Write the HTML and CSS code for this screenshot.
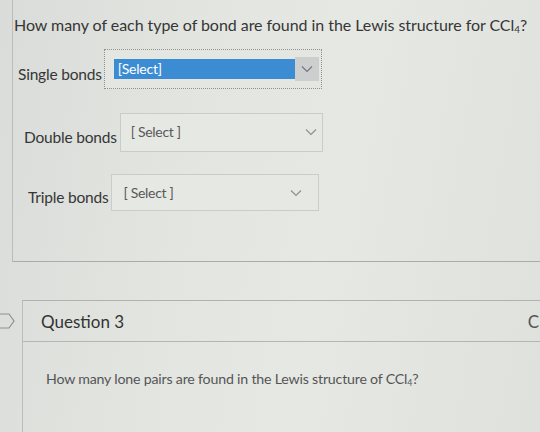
FILE: index.html
```html
<!DOCTYPE html>
<html>
<head>
<meta charset="utf-8">
<link rel="stylesheet" href="styles.css">
</head>
<body>
<div class="page">
  <section class="card1">
    <p class="q">How many of each type of bond are found in the Lewis structure for CCl<sub>4</sub>?</p>
    <div class="row r1">
      <span class="lbl">Single bonds</span>
      <div class="sel focus">
        <span class="hl">[Select]</span>
        <span class="arr"><svg width="12" height="8" viewBox="0 0 12 8"><path d="M1 1.5 L6 6.5 L11 1.5" fill="none" stroke="#6f7a86" stroke-width="1.2"/></svg></span>
      </div>
    </div>
    <div class="row r2">
      <span class="lbl">Double bonds</span>
      <div class="sel plain w2">
        <span class="txt">[ Select ]</span>
        <svg width="12" height="8" viewBox="0 0 12 8"><path d="M1 1.5 L6 6.5 L11 1.5" fill="none" stroke="#8a8f94" stroke-width="1.1"/></svg>
      </div>
    </div>
    <div class="row r3">
      <span class="lbl">Triple bonds</span>
      <div class="sel plain w3">
        <span class="txt">[ Select ]</span>
        <svg width="12" height="8" viewBox="0 0 12 8"><path d="M1 1.5 L6 6.5 L11 1.5" fill="none" stroke="#8a8f94" stroke-width="1.1"/></svg>
      </div>
    </div>
  </section>
  <div class="q3wrap">
    <svg class="flag" width="20" height="16" viewBox="0 0 20 16"><path d="M-4 1 H9 L14 8 L9 15 H-4" fill="none" stroke="#8d918d" stroke-width="1.2"/></svg>
    <section class="card2">
      <header class="head"><span>Question 3</span><span class="cut">C</span></header>
      <p class="q2">How many lone pairs are found in the Lewis structure of CCl<sub>4</sub>?</p>
    </section>
  </div>
</div>
</body>
</html>
```
FILE: styles.css
```css
html, body {
  margin: 0;
  padding: 0;
}
body {
  width: 540px;
  height: 432px;
  overflow: hidden;
  background: linear-gradient(100deg, #d9dcd8 0%, #e3e5e1 35%, #e6e8e4 60%, #dfe1dd 100%);
  font-family: Lato, "Open Sans", sans-serif;
  color: #353535;
}
.page {
  display: flex;
  flex-direction: column;
}
.card1 {
  margin-left: 12px;
  height: 262px;
  box-sizing: border-box;
  border-left: 1px solid #b9bcb8;
  border-bottom: 1px solid #a9aca8;
  display: flex;
  flex-direction: column;
}
.q {
  margin: 15px 0 0 1px;
  font-size: 16px;
  letter-spacing: -0.05px;
  line-height: 20px;
  color: #363636;
  white-space: nowrap;
}
.q sub, .q2 sub {
  font-size: 0.62em;
  vertical-align: -0.2em;
  line-height: 0;
}
.row {
  display: flex;
  align-items: center;
}
.lbl {
  font-size: 15.5px;
  letter-spacing: -0.2px;
  color: #363636;
  white-space: nowrap;
}
.r1 {
  margin-top: 14px;
  padding-left: 5px;
}
.r1 .lbl { margin-right: 2px; margin-top: 10px; }
.sel {
  box-sizing: border-box;
  display: flex;
  align-items: center;
}
.focus {
  width: 218px;
  height: 40px;
  border: 1px dotted #8e918e;
  padding: 0 2px 0 9px;
  background: #e4e6e2;
}
.hl {
  width: 182px;
  height: 20px;
  background: #3c8cd4;
  color: #fff;
  font-size: 14px;
  line-height: 20px;
  padding-left: 4px;
  box-sizing: border-box;
  letter-spacing: -0.2px;
}
.arr {
  width: 24px;
  height: 24px;
  background: #cdcfcf;
  display: flex;
  align-items: center;
  justify-content: center;
}
.r2 {
  margin-top: 24px;
  padding-left: 11px;
}
.r2 .lbl { margin-right: 3px; margin-top: 8px; }
.plain {
  border: 1px solid #c9ccc8;
  background: #e6e8e4;
  justify-content: space-between;
}
.plain .txt {
  font-size: 14px;
  color: #585858;
  letter-spacing: -0.3px;
}
.w2 {
  width: 203px;
  height: 39px;
  padding: 0 5px 2px 10px;
}
.r3 {
  margin-top: 22px;
  padding-left: 15px;
}
.r3 .lbl { margin-right: 3px; margin-top: 8px; }
.w3 {
  width: 208px;
  height: 37px;
  padding: 0 16px 0 11px;
}
.q3wrap {
  display: flex;
  margin-top: 38px;
}
.flag {
  margin-top: 13px;
  flex: none;
}
.card2 {
  flex: 1;
  border-top: 1px solid #afb2ae;
  border-left: 1px solid #b9bcb8;
  margin-left: 2px;
  height: 131px;
}
.head {
  height: 40px;
  border-bottom: 1px solid #b3b6b2;
  display: flex;
  align-items: center;
  justify-content: space-between;
  padding-left: 18px;
  font-size: 17px;
  color: #333;
}
.cut {
  margin-right: 1px;
  color: #555;
}
.q2 {
  margin: 28px 0 0 23px;
  font-size: 14.2px;
  color: #555;
  letter-spacing: -0.2px;
}
```
